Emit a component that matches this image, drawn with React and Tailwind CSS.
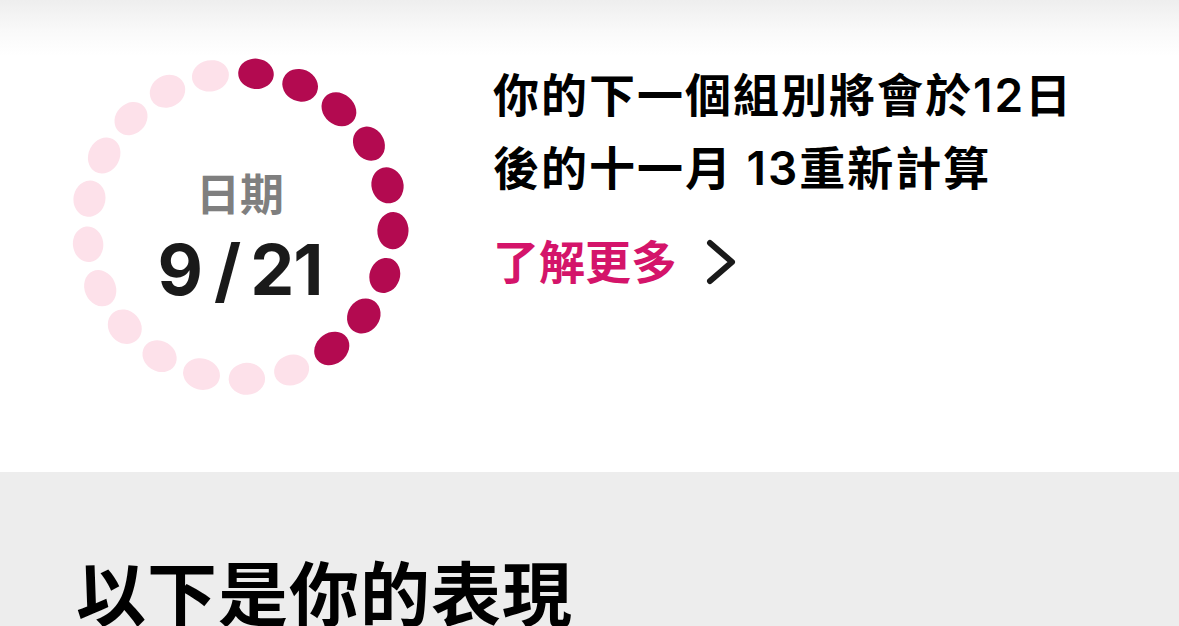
import React from 'react';

const DARK = '#b30a50';
const LIGHT = '#fde1ea';

const Ring = ({ done = 9, total = 21 }) => {
  const cx = 170;
  const cy = 170;
  const r = 153;
  const dots = Array.from({ length: total }, (_, i) => {
    const deg = 6 + (360 / total) * i;
    const rad = (deg * Math.PI) / 180;
    return {
      x: cx + r * Math.sin(rad),
      y: cy - r * Math.cos(rad),
      deg,
      fill: i < done ? DARK : LIGHT,
      rx: 17.8 + ((i * 7) % 3) * 0.4,
      ry: 15.2 + ((i * 5) % 3) * 0.4,
    };
  });

  return (
    <div className="relative w-[340px] h-[340px] shrink-0">
      <svg width="340" height="340" viewBox="0 0 340 340" className="block">
        {dots.map((d, i) => (
          <ellipse
            key={i}
            cx={d.x}
            cy={d.y}
            rx={d.rx}
            ry={d.ry}
            fill={d.fill}
            transform={`rotate(${d.deg} ${d.x} ${d.y})`}
          />
        ))}
      </svg>
      <div className="absolute inset-0 flex flex-col items-center pt-[110px]">
        <div className="text-[44px] leading-[52px] font-semibold text-[#7f7f7f] [font-family:'Noto_Sans_CJK_TC',sans-serif]">
          日期
        </div>
        <div className="mt-[12px] text-[70px] leading-[80px] font-bold text-[#1a1a1a] tracking-[-1px] [font-family:Inter,'Liberation_Sans',sans-serif]">
          9<span className="ml-[12px] mr-[10px]">/</span>21
        </div>
      </div>
    </div>
  );
};

export default function App() {
  return (
    <div className="w-[1179px] h-[626px] overflow-hidden bg-white [font-family:Inter,'Noto_Sans_CJK_TC',sans-serif]">
      <section className="h-[472px] bg-[linear-gradient(to_bottom,#eeeeee_0px,#f9f9f9_30px,#ffffff_56px)] flex pl-[70px] pt-[56px]">
        <Ring />
        <div className="ml-[83px] pt-[3px]">
          <p className="text-[46px] leading-[73px] font-semibold text-black tracking-[2px]">
            你的下一個組別將會於12日
            <br />
            後的十一月 13重新計算
          </p>
          <button className="mt-[29px] flex items-center gap-[26px] text-[46px] leading-[56px] font-semibold text-[#d4146a]">
            了解更多
            <svg width="34" height="50" viewBox="0 0 34 50" fill="none">
              <path d="M7 6 L29 25 L7 44" stroke="#1a1a1a" strokeWidth="6" strokeLinecap="round" strokeLinejoin="round" />
            </svg>
          </button>
        </div>
      </section>
      <section className="h-[154px] bg-[#ededed] pl-[76px] pt-[74px]">
        <h2 className="text-[70px] leading-[90px] font-bold text-black tracking-[1px] [font-family:'Noto_Sans_CJK_TC',sans-serif]">
          以下是你的表現
        </h2>
      </section>
    </div>
  );
}
